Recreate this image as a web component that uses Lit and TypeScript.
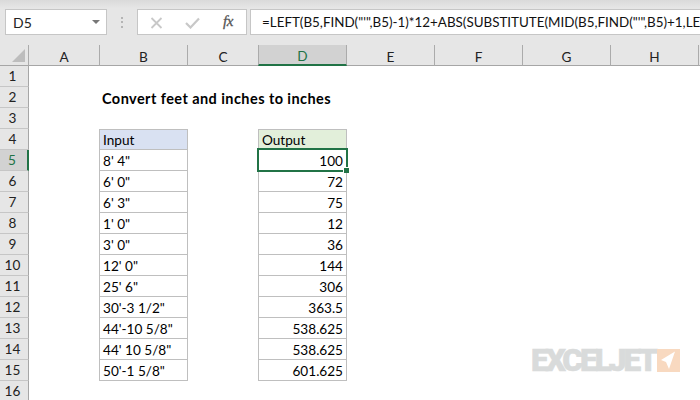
import { LitElement, html, css } from "lit";
import { customElement } from "lit/decorators.js";

const COLS = ["A", "B", "C", "D", "E", "F", "G", "H"];
const INPUTS = [`8' 4"`, `6' 0"`, `6' 3"`, `1' 0"`, `3' 0"`, `12' 0"`, `25' 6"`, `30'-3 1/2"`, `44'-10 5/8"`, `44' 10 5/8"`, `50'-1 5/8"`];
const OUTPUTS = ["100", "72", "75", "12", "36", "144", "306", "363.5", "538.625", "538.625", "601.625"];
const FORMULA = `=LEFT(B5,FIND("'",B5)-1)*12+ABS(SUBSTITUTE(MID(B5,FIND("'",B5)+1,LE`;

@customElement("app-root")
export class AppRoot extends LitElement {
  static styles = css`
    :host {
      display: block;
      width: 700px;
      height: 400px;
      overflow: hidden;
      position: relative;
      background: #fff;
      font-family: "Lato", "Carlito", "Liberation Sans", sans-serif;
      font-size: 13.6px;
      color: #000;
    }
    .toolbar {
      height: 45px;
      box-sizing: border-box;
      padding: 9px 0 10px 5px;
      display: flex;
      background: linear-gradient(#dadada 0, #e6e6e6 8px);
    }
    .box {
      box-sizing: border-box;
      height: 26px;
      background: #fff;
      border: 1px solid #c6c6c6;
      display: flex;
      align-items: center;
    }
    .name {
      width: 102px;
      padding: 0 7px 0 7px;
      justify-content: space-between;
      color: #222;
      font-size: 14px;
    }
    .caret {
      width: 0;
      height: 0;
      border-left: 4px solid transparent;
      border-right: 4px solid transparent;
      border-top: 4px solid #777;
      margin-right: -1px;
    }
    .grip {
      width: 30px;
      display: flex;
      flex-direction: column;
      align-items: center;
      justify-content: center;
      gap: 2.5px;
    }
    .grip i {
      width: 2px;
      height: 2px;
      background: #b4b4b4;
    }
    .buttons {
      width: 110px;
      margin-right: 3px;
      position: relative;
    }
    .buttons svg {
      display: block;
      position: absolute;
    }
    .fx {
      position: absolute;
      left: 85px;
      top: 3px;
      font: italic 15px "Liberation Serif", serif;
      letter-spacing: -0.5px;
      -webkit-text-stroke: 0.3px #555;
      color: #555;
    }
    .formula {
      flex: 1;
      min-width: 0;
      border-right: none;
      padding-left: 11px;
      white-space: nowrap;
      overflow: hidden;
      color: #111;
      font-size: 13.4px;
    }
    .sheet {
      display: grid;
      grid-template-columns: 29px 70px 89px 70px 89px 88px 88px 88px 88px 20px;
      grid-auto-rows: 21px;
      grid-template-rows: 21px;
    }
    .hd {
      background: #e6e6e6;
      box-sizing: border-box;
      display: flex;
      align-items: center;
      justify-content: center;
      border-bottom: 1px solid #a6a6a6;
      padding-top: 3px;
      color: #222;
    }
    .hd.l { border-left: 1px solid #ababab; }
    .hd.r { border-right: 1px solid #ababab; }
    .hd.sel {
      background: #d2d2d2;
      color: #217346;
      border-bottom: 2px solid #217346;
    }
    .corner {
      position: relative;
      border-right: 1px solid #ababab;
    }
    .corner svg {
      position: absolute;
      left: 12px;
      top: 4px;
    }
    .rh {
      background: #e6e6e6;
      box-sizing: border-box;
      display: flex;
      align-items: center;
      justify-content: center;
      border-right: 1px solid #a6a6a6;
      border-bottom: 1px solid #c6c6c6;
      padding-right: 3px;
      color: #222;
    }
    .rh.sel {
      background: #d2d2d2;
      color: #217346;
      border-right: 2px solid #217346;
    }
    .c {
      box-sizing: border-box;
      display: flex;
      align-items: center;
      white-space: nowrap;
      padding: 1px 3px 0;
      min-width: 0;
    }
    .title {
      font-weight: 700;
      font-size: 14.5px;
      letter-spacing: 0.43px;
    }
    .t {
      border-left: 1px solid #bfbfbf;
      border-right: 1px solid #bfbfbf;
      border-bottom: 1px solid #bfbfbf;
    }
    .t.top { border-top: 1px solid #bfbfbf; }
    .t.num { justify-content: flex-end; }
    .in-h { background: #d9e1f2; }
    .out-h { background: #e2efda; }
    .active {
      position: relative;
    }
    .active::before {
      content: "";
      position: absolute;
      left: -2px;
      right: -2px;
      top: -2px;
      bottom: -2px;
      border: 2px solid #217346;
    }
    .active::after {
      content: "";
      position: absolute;
      right: -3px;
      bottom: -3px;
      width: 5px;
      height: 5px;
      background: #217346;
      border-left: 1px solid #fff;
      border-top: 1px solid #fff;
    }
    .logo {
      position: absolute;
      left: 531px;
      top: 342px;
      display: flex;
      align-items: flex-start;
    }
    .logo span {
      width: 126px;
      font: 900 31.5px/37px "Roboto", "Liberation Sans", sans-serif;
      letter-spacing: -3px;
      -webkit-text-stroke: 0.6px #d9dbdb;
      color: #d9dbdb;
    }
    .logo svg {
      margin-top: 7px;
    }
  `;

  private cell(r: number, c: number) {
    if (r === 2 && c === 1) return html`<div class="c title" style="grid-column: span 4">Convert feet and inches to inches</div>`;
    if (r === 2 && c > 1 && c < 5) return null;
    if (c === 1 && r === 4) return html`<div class="c t top in-h">Input</div>`;
    if (c === 3 && r === 4) return html`<div class="c t top out-h">Output</div>`;
    if (c === 1 && r >= 5 && r <= 15) return html`<div class="c t">${INPUTS[r - 5]}</div>`;
    if (c === 3 && r >= 5 && r <= 15)
      return html`<div class="c t num ${r === 5 ? "active" : ""}">${OUTPUTS[r - 5]}</div>`;
    return html`<div class="c"></div>`;
  }

  render() {
    const rows = Array.from({ length: 16 }, (_, i) => i + 1);
    return html`
      <div class="toolbar">
        <div class="box name"><span>D5</span><span class="caret"></span></div>
        <div class="grip"><i></i><i></i><i></i></div>
        <div class="box buttons">
          <svg style="left:12px;top:7px" width="13" height="12" viewBox="0 0 13 12" fill="none" stroke="#c8c8c8" stroke-width="1.8">
            <path d="M1.5 1l10 10M11.5 1l-10 10" />
          </svg>
          <svg style="left:47px;top:7px" width="15" height="12" viewBox="0 0 15 12" fill="none" stroke="#c8c8c8" stroke-width="2.2">
            <path d="M1 6l4.5 4.5L14 1.5" />
          </svg>
          <span class="fx">fx</span>
        </div>
        <div class="box formula">${FORMULA}</div>
      </div>
      <div class="sheet">
        <div class="hd corner">
          <svg width="14" height="14" viewBox="0 0 14 14"><polygon points="13,0 13,13 0,13" fill="#bdbdbd" /></svg>
        </div>
        ${COLS.map(
          (h) =>
            html`<div class="hd ${h === "B" || h === "D" ? "l" : ""} ${h !== "A" && h !== "C" ? "r" : ""} ${h === "D" ? "sel" : ""}">${h}</div>`
        )}
        <div class="hd"></div>
        ${rows.map(
          (r) => html`
            <div class="rh ${r === 5 ? "sel" : ""}">${r}</div>
            ${Array.from({ length: 9 }, (_, c) => this.cell(r, c))}
          `
        )}
      </div>
      <div class="logo">
        <span>EXCELJET</span>
        <svg width="23" height="23" viewBox="0 0 23 23">
          <rect width="23" height="23" fill="#f8d9c0" />
          <polygon points="4,11 18,2.5 12,20 9,13" fill="#fff" />
        </svg>
      </div>
    `;
  }
}
